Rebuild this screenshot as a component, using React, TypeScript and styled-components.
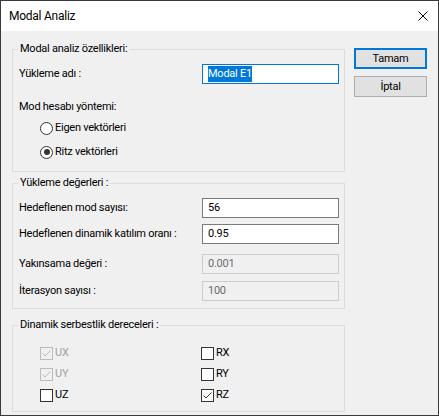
import styled, { createGlobalStyle } from "styled-components";

const GlobalStyle = createGlobalStyle`
  html, body {
    margin: 0;
    padding: 0;
    background: #f0f0f0;
  }
  body {
    font-family: Roboto, "Liberation Sans", sans-serif;
    font-size: 11px;
    letter-spacing: -0.25px;
    color: #000;
  }
`;

const Window = styled.div`
  width: 439px;
  height: 416px;
  box-sizing: border-box;
  border: 1px solid #3a3a3a;
  background: #f0f0f0;
  display: flex;
  flex-direction: column;
`;

const TitleBar = styled.div`
  height: 30px;
  background: #fff;
  display: flex;
  align-items: center;
  justify-content: space-between;
  padding: 0 10px 0 8px;
`;

const Title = styled.span`
  font-size: 12px;
  line-height: 16px;
`;

const Body = styled.div`
  display: flex;
  gap: 9px;
  padding: 10px 0 0 11px;
`;

const Main = styled.div`
  width: 333px;
  display: flex;
  flex-direction: column;
`;

const Side = styled.div`
  display: flex;
  flex-direction: column;
  gap: 7px;
  margin-top: 7px;
`;

const Group = styled.fieldset<{ $mt: number; $pb: number }>`
  margin: ${p => p.$mt}px 0 0;
  padding: 0 5px ${p => p.$pb}px 6px;
  border: 1px solid #dcdcdc;
  min-width: 0;
`;

const Legend = styled.legend`
  margin-left: -1px;
  padding: 0 2px;
  line-height: 16px;
  white-space: nowrap;
`;

const Row = styled.div<{ $mt: number; $indent?: number }>`
  height: 20px;
  margin-top: ${p => p.$mt}px;
  margin-left: ${p => p.$indent ?? 0}px;
  display: flex;
  align-items: center;
  justify-content: space-between;
`;

const Label = styled.span`
  line-height: 16px;
  white-space: nowrap;
`;

const TextBox = styled.div<{ $variant: "normal" | "focused" | "disabled" }>`
  flex-shrink: 0;
  width: 137px;
  height: 20px;
  box-sizing: border-box;
  padding: 0 5px;
  display: flex;
  align-items: center;
  line-height: 16px;
  border: 1px solid
    ${p => (p.$variant === "focused" ? "#0078d7" : p.$variant === "disabled" ? "#cccccc" : "#7a7a7a")};
  background: ${p => (p.$variant === "disabled" ? "#f0f0f0" : "#fff")};
  color: ${p => (p.$variant === "disabled" ? "#6d6d6d" : "#000")};
`;

const Selected = styled.span`
  background: #0078d7;
  color: #fff;
`;

const Button = styled.button<{ $default?: boolean }>`
  width: 73px;
  height: 21px;
  box-sizing: border-box;
  padding: 0;
  font-family: inherit;
  font-size: inherit;
  letter-spacing: inherit;
  color: #000;
  background: #e1e1e1;
  border: ${p => (p.$default ? "2px solid #0078d7" : "1px solid #adadad")};
`;

const Choice = styled.label<{ $disabled?: boolean }>`
  display: flex;
  align-items: center;
  gap: 2px;
  height: 20px;
  line-height: 16px;
  white-space: nowrap;
  color: ${p => (p.$disabled ? "#a3a3a3" : "#000")};
`;

const RadioCircle = styled.span<{ $checked?: boolean }>`
  width: 13px;
  height: 13px;
  box-sizing: border-box;
  border: 1px solid #333;
  border-radius: 50%;
  background: #fff;
  display: flex;
  align-items: center;
  justify-content: center;
  &::after {
    content: "";
    width: 6px;
    height: 6px;
    border-radius: 50%;
    background: ${p => (p.$checked ? "#333" : "transparent")};
  }
`;

const Box = styled.span<{ $disabled?: boolean }>`
  width: 13px;
  height: 13px;
  box-sizing: border-box;
  border: 1px solid ${p => (p.$disabled ? "#bcbcbc" : "#333")};
  background: ${p => (p.$disabled ? "#f0f0f0" : "#fff")};
  display: flex;
`;

const CheckGrid = styled.div`
  margin: 10px 0 0 21px;
  display: grid;
  grid-template-columns: 161px 1fr;
  row-gap: 1px;
`;

function CloseIcon() {
  return (
    <svg width="10" height="10" viewBox="0 0 10 10">
      <path d="M0.5 0.5 L9.5 9.5 M9.5 0.5 L0.5 9.5" stroke="#000" strokeWidth="1" />
    </svg>
  );
}

function Radio({ label, checked }: { label: string; checked?: boolean }) {
  return (
    <Choice>
      <RadioCircle $checked={checked} />
      {label}
    </Choice>
  );
}

function Check({ label, checked, disabled }: { label: string; checked?: boolean; disabled?: boolean }) {
  return (
    <Choice $disabled={disabled}>
      <Box $disabled={disabled}>
        {checked && (
          <svg width="11" height="11" viewBox="0 0 11 11">
            <polyline
              points="1.5,5.5 4,8 9.5,2.5"
              fill="none"
              stroke={disabled ? "#bcbcbc" : "#333"}
              strokeWidth="1"
            />
          </svg>
        )}
      </Box>
      {label}
    </Choice>
  );
}

export default function App() {
  return (
    <>
      <GlobalStyle />
      <Window>
        <TitleBar>
          <Title>Modal Analiz</Title>
          <CloseIcon />
        </TitleBar>
        <Body>
          <Main>
            <Group $mt={0} $pb={9}>
              <Legend>Modal analiz özellikleri:</Legend>
              <Row $mt={7}>
                <Label>Yükleme adı :</Label>
                <TextBox $variant="focused">
                  <Selected>Modal E1</Selected>
                </TextBox>
              </Row>
              <Row $mt={13}>
                <Label>Mod hesabı yöntemi:</Label>
              </Row>
              <Row $mt={1} $indent={21}>
                <Radio label="Eigen vektörleri" />
              </Row>
              <Row $mt={4} $indent={21}>
                <Radio label="Ritz vektörleri" checked />
              </Row>
            </Group>

            <Group $mt={3} $pb={7}>
              <Legend>Yükleme değerleri :</Legend>
              <Row $mt={7}>
                <Label>Hedeflenen mod sayısı:</Label>
                <TextBox $variant="normal">56</TextBox>
              </Row>
              <Row $mt={6}>
                <Label>Hedeflenen dinamik katılım oranı :</Label>
                <TextBox $variant="normal">0.95</TextBox>
              </Row>
              <Row $mt={10}>
                <Label>Yakınsama değeri :</Label>
                <TextBox $variant="disabled">0.001</TextBox>
              </Row>
              <Row $mt={7}>
                <Label>İterasyon sayısı :</Label>
                <TextBox $variant="disabled">100</TextBox>
              </Row>
            </Group>

            <Group $mt={8} $pb={6}>
              <Legend>Dinamik serbestlik dereceleri :</Legend>
              <CheckGrid>
                <Check label="UX" checked disabled />
                <Check label="RX" />
                <Check label="UY" checked disabled />
                <Check label="RY" />
                <Check label="UZ" />
                <Check label="RZ" checked />
              </CheckGrid>
            </Group>
          </Main>
          <Side>
            <Button $default>Tamam</Button>
            <Button>İptal</Button>
          </Side>
        </Body>
      </Window>
    </>
  );
}
